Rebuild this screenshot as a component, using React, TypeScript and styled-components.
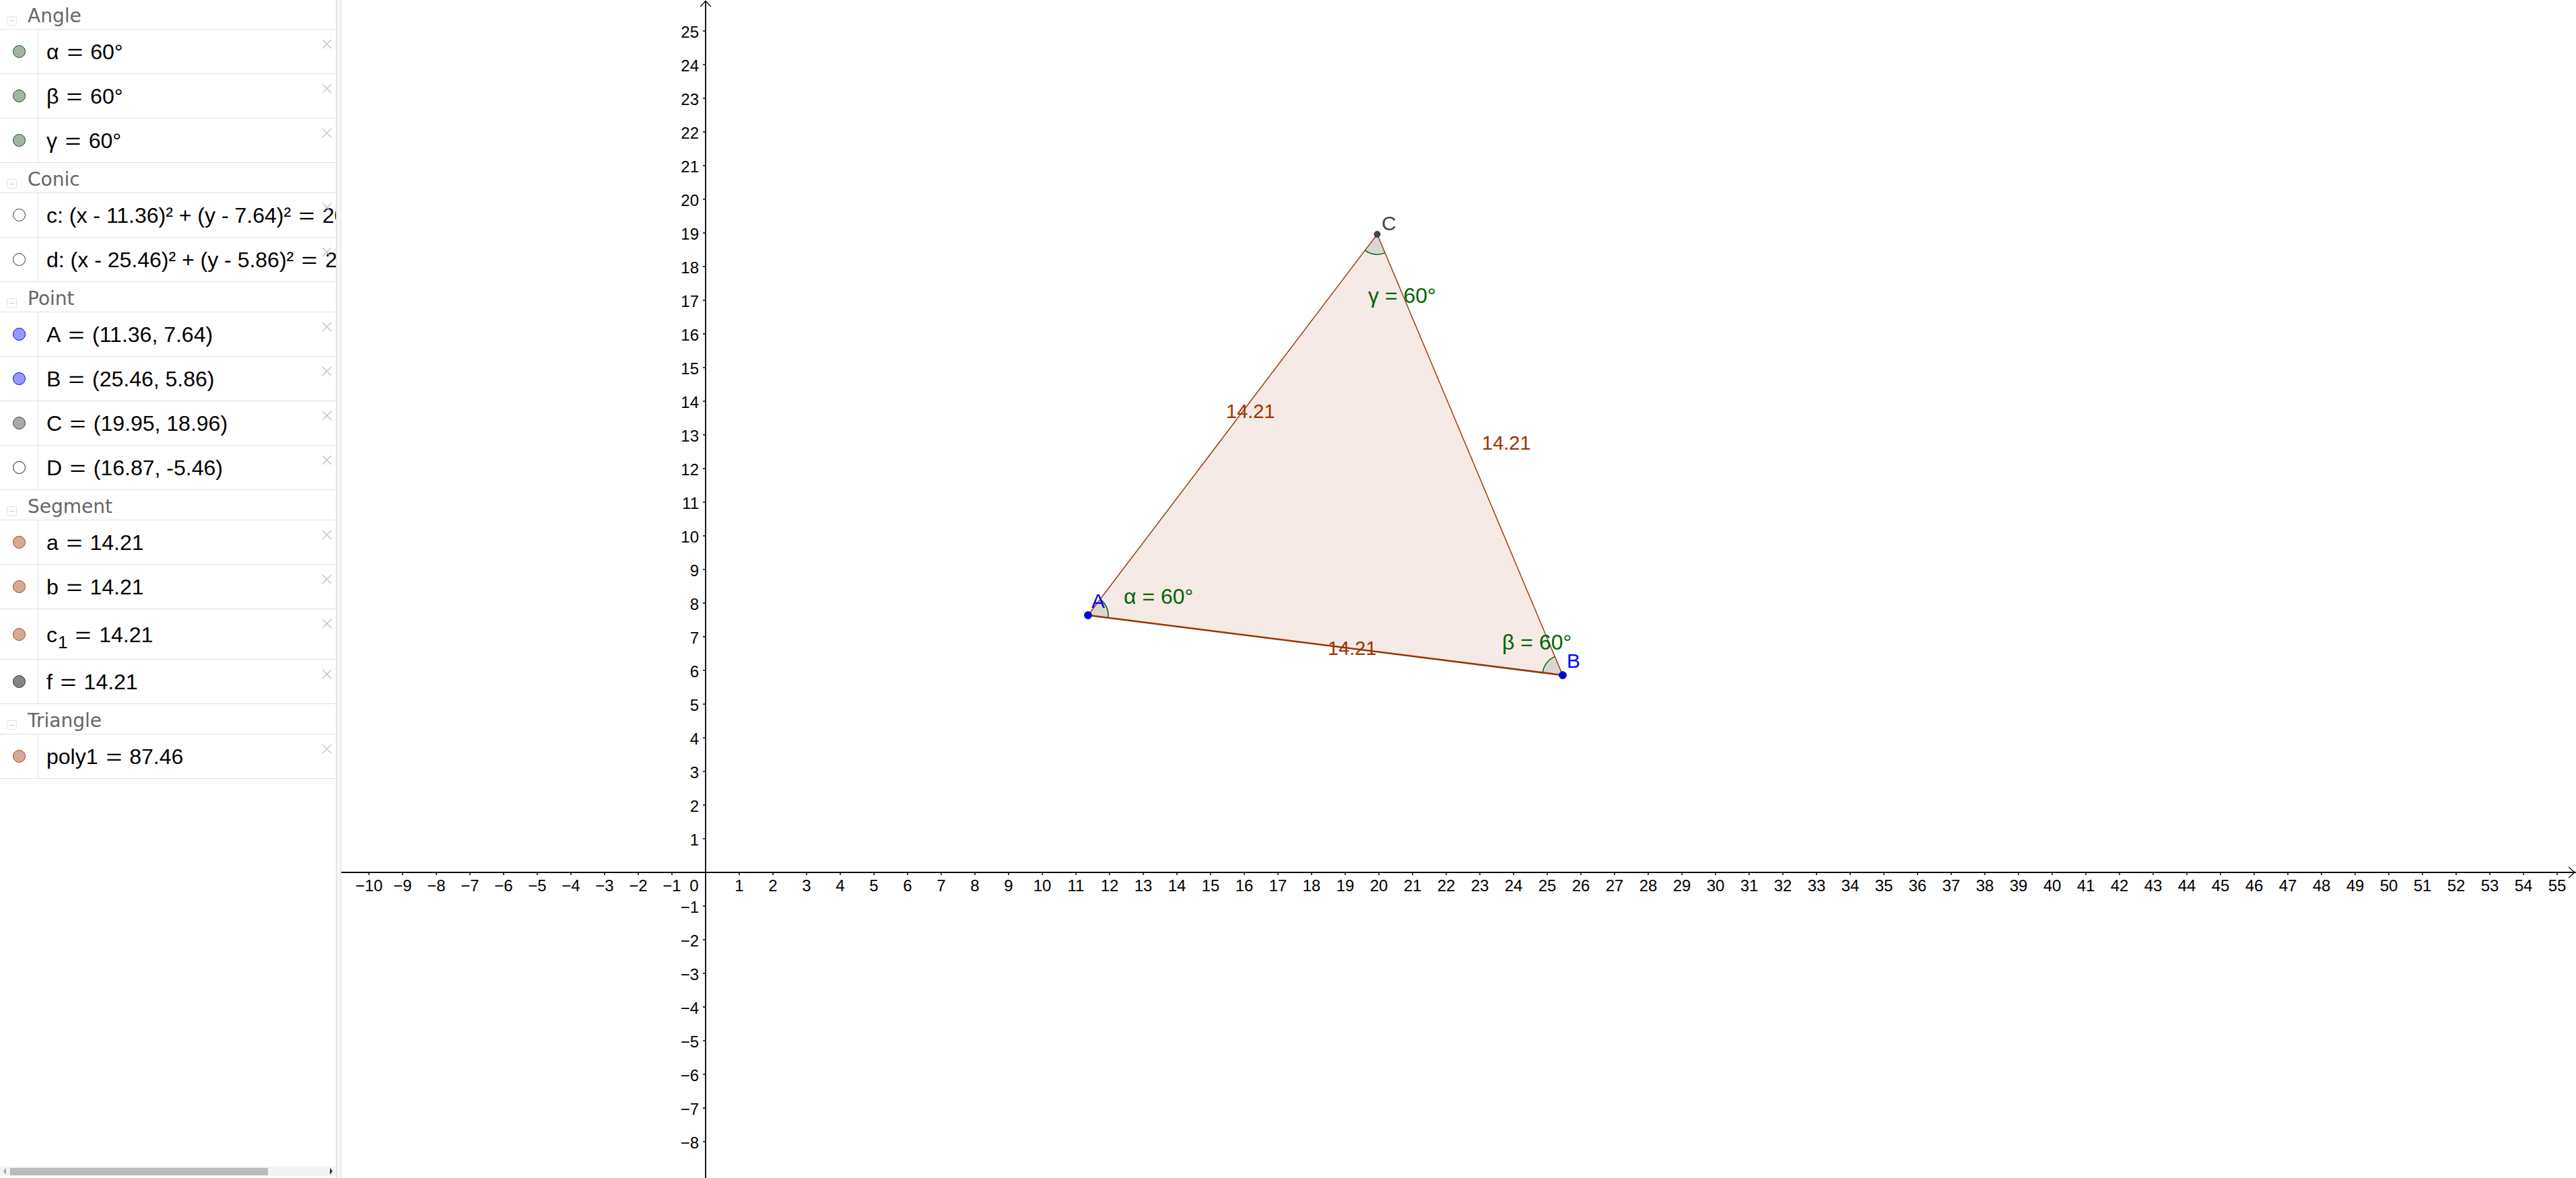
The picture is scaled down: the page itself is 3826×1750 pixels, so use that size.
import React from 'react'
import styled, { createGlobalStyle } from 'styled-components'

const GlobalStyle = createGlobalStyle`
  html, body {
    margin: 0;
    padding: 0;
    background: #fff;
    overflow: hidden;
  }
  body {
    font-family: "Liberation Sans", Arial, sans-serif;
  }
`

const Layout = styled.div`
  display: flex;
  width: 3826px;
  height: 1750px;
`

const AlgebraPanel = styled.div`
  width: 499px;
  flex: none;
  display: flex;
  flex-direction: column;
  background: #fff;
  overflow: hidden;
  border-right: 1px solid #d9d9d9;
`

const Splitter = styled.div`
  width: 6px;
  flex: none;
  background: #f6f6f6;
  border-right: 1px solid #e3e3e3;
`

const List = styled.div`
  flex: 1;
  display: flex;
  flex-direction: column;
`

const GroupHeader = styled.div<{ $first?: boolean }>`
  height: ${p => (p.$first ? 44 : 45)}px;
  flex: none;
  display: flex;
  align-items: center;
  padding: 4px 0 0 10px;
  box-sizing: border-box;
  border-bottom: 1px solid #e0e0e0;
  font-family: "DejaVu Sans", sans-serif;
  font-size: 28px;
  color: #666;
  gap: 16px;
`

const Collapse = styled.span`
  width: 15px;
  height: 14px;
  margin-top: 14px;
  box-sizing: border-box;
  border: 1px solid #e4e4e4;
  border-radius: 2px;
  display: flex;
  align-items: center;
  justify-content: center;

  &::after {
    content: '';
    width: 7px;
    height: 1px;
    background: #c8c8c8;
  }
`

const Row = styled.div<{ $tall?: boolean }>`
  position: relative;
  height: ${p => (p.$tall ? 74 : 65)}px;
  flex: none;
  display: flex;
  border-bottom: 1px solid #e0e0e0;
`

const MarkerCell = styled.div`
  width: 56px;
  flex: none;
  border-right: 1px solid #e0e0e0;
  display: flex;
  align-items: center;
  justify-content: center;
`

const Marker = styled.span<{ $fill: string; $stroke: string }>`
  width: 19px;
  height: 19px;
  box-sizing: border-box;
  border-radius: 50%;
  background: ${p => p.$fill};
  border: 1.5px solid ${p => p.$stroke};
`

const Content = styled.div`
  flex: 1;
  display: flex;
  align-items: center;
  padding: 2px 0 0 12px;
  font-size: 32px;
  color: #000;
  white-space: nowrap;
  overflow: hidden;
`

const Label = styled.span`
  white-space: nowrap;
`

const Eq = styled.span`
  display: inline-block;
  margin: 0 14px;
  transform: scaleX(1.28);
`

const Sub = styled.sub`
  font-size: 26px;
  vertical-align: -9px;
  line-height: 0;
  margin-left: 1px;
`

const Close = styled.svg`
  position: absolute;
  top: 14px;
  right: 6px;
  width: 15px;
  height: 15px;
`

const ScrollTrack = styled.div`
  flex: none;
  height: 14px;
  margin-bottom: 3px;
  display: flex;
  align-items: center;
  background: #f3f3f3;
`

const Arrow = styled.span<{ $dir: 'left' | 'right' }>`
  width: 0;
  height: 0;
  border-top: 5px solid transparent;
  border-bottom: 5px solid transparent;
  ${p =>
    p.$dir === 'left'
      ? 'border-right: 4px solid #9aa99a; margin-left: 5px;'
      : 'border-left: 4px solid #333; margin: 0 5px 0 auto;'}
`

const Thumb = styled.span`
  width: 383px;
  height: 11px;
  margin-left: 6px;
  background: #bcbcbc;
`

const Graphics = styled.div`
  flex: 1;
  background: #fff;
  overflow: hidden;

  svg {
    display: block;
  }
`

type Item = {
  label: React.ReactNode
  value: string
  fill: string
  stroke: string
  tall?: boolean
}

type Group = { title: string; items: Item[] }

const angleDot = { fill: '#a5b3a5', stroke: '#0a5a0a' }
const segDot = { fill: '#d5ab97', stroke: '#a0461e' }

const groups: Group[] = [
  {
    title: 'Angle',
    items: [
      { label: 'α', value: '60°', ...angleDot },
      { label: 'β', value: '60°', ...angleDot },
      { label: 'γ', value: '60°', ...angleDot },
    ],
  },
  {
    title: 'Conic',
    items: [
      { label: 'c: (x - 11.36)² + (y - 7.64)²', value: '201.92', fill: '#fff', stroke: '#333' },
      { label: 'd: (x - 25.46)² + (y - 5.86)²', value: '201.92', fill: '#fff', stroke: '#333' },
    ],
  },
  {
    title: 'Point',
    items: [
      { label: 'A', value: '(11.36, 7.64)', fill: '#9999ff', stroke: '#0000ee' },
      { label: 'B', value: '(25.46, 5.86)', fill: '#9999ff', stroke: '#0000ee' },
      { label: 'C', value: '(19.95, 18.96)', fill: '#a8aba8', stroke: '#444' },
      { label: 'D', value: '(16.87, -5.46)', fill: '#fff', stroke: '#222' },
    ],
  },
  {
    title: 'Segment',
    items: [
      { label: 'a', value: '14.21', ...segDot },
      { label: 'b', value: '14.21', ...segDot },
      { label: <>c<Sub>1</Sub></>, value: '14.21', tall: true, ...segDot },
      { label: 'f', value: '14.21', fill: '#858585', stroke: '#333' },
    ],
  },
  {
    title: 'Triangle',
    items: [{ label: 'poly1', value: '87.46', ...segDot }],
  },
]

// coordinate system of the graphics view (page pixels)
const OX = 1048
const OY = 1296
const U = 50
const px = (x: number) => OX + x * U
const py = (y: number) => OY - y * U

type Pt = { x: number; y: number }
const A: Pt = { x: px(11.36), y: py(7.64) }
const B: Pt = { x: px(25.46), y: py(5.86) }
const C: Pt = { x: px(19.95), y: py(18.96) }

const minus = (n: number) => (n < 0 ? '\u2212' + Math.abs(n) : String(n))

function arcPoints(v: Pt, p1: Pt, p2: Pt, r: number) {
  const a1 = Math.atan2(p1.y - v.y, p1.x - v.x)
  const a2 = Math.atan2(p2.y - v.y, p2.x - v.x)
  const s = { x: v.x + r * Math.cos(a1), y: v.y + r * Math.sin(a1) }
  const e = { x: v.x + r * Math.cos(a2), y: v.y + r * Math.sin(a2) }
  const sweep = Math.sin(a2 - a1) > 0 ? 1 : 0
  return { s, e, sweep }
}

const AngleMark = ({ v, p1, p2 }: { v: Pt; p1: Pt; p2: Pt }) => {
  const r = 30
  const { s, e, sweep } = arcPoints(v, p1, p2, r)
  const arc = `A ${r} ${r} 0 0 ${sweep} ${e.x} ${e.y}`
  return (
    <g>
      <path d={`M ${v.x} ${v.y} L ${s.x} ${s.y} ${arc} Z`} fill="#cfcfcf" fillOpacity={0.75} />
      <path d={`M ${s.x} ${s.y} ${arc}`} fill="none" stroke="#006400" strokeWidth={1.5} />
    </g>
  )
}

const xTicks = Array.from({ length: 66 }, (_, i) => i - 10).filter(i => i !== 0)
const yTicks = Array.from({ length: 34 }, (_, i) => i - 8).filter(i => i !== 0)

const Plot = () => (
  <svg width={3319} height={1750} viewBox="507 0 3319 1750">
    {/* axes */}
    <g stroke="#000" strokeWidth={1.8} fill="none">
      <line x1={507} y1={OY} x2={3826} y2={OY} />
      <line x1={OX} y1={1} x2={OX} y2={1750} />
      <polyline points={`${OX - 8},${10} ${OX},${1.5} ${OX + 8},${10}`} strokeWidth={1.2} />
      <polyline points={`3815,${OY - 8} 3824,${OY} 3815,${OY + 8}`} strokeWidth={1.2} />
    </g>
    <g stroke="#000" strokeWidth={1.5}>
      {xTicks.map(i => (
        <line key={i} x1={px(i)} y1={OY} x2={px(i)} y2={OY + 4} />
      ))}
      {yTicks.map(j => (
        <line key={j} x1={OX - 4} y1={py(j)} x2={OX} y2={py(j)} />
      ))}
    </g>
    <g fontFamily='"Liberation Sans", Arial, sans-serif' fontSize={24} fill="#000">
      {xTicks.map(i => (
        <text key={i} x={px(i)} y={OY + 28} textAnchor="middle">
          {minus(i)}
        </text>
      ))}
      <text x={1031} y={OY + 28} textAnchor="middle">0</text>
      {yTicks.map(j => (
        <text key={j} x={OX - 10} y={py(j) + 10} textAnchor="end">
          {minus(j)}
        </text>
      ))}
    </g>

    {/* triangle */}
    <polygon
      points={`${A.x},${A.y} ${B.x},${B.y} ${C.x},${C.y}`}
      fill="#993300"
      fillOpacity={0.1}
      stroke="none"
    />
    <AngleMark v={A} p1={B} p2={C} />
    <AngleMark v={B} p1={C} p2={A} />
    <AngleMark v={C} p1={A} p2={B} />
    <g stroke="#993300" fill="none">
      <line x1={C.x} y1={C.y} x2={A.x} y2={A.y} strokeWidth={1.4} />
      <line x1={C.x} y1={C.y} x2={B.x} y2={B.y} strokeWidth={1.4} />
      <line x1={A.x} y1={A.y} x2={B.x} y2={B.y} strokeWidth={2.6} />
    </g>

    {/* points */}
    <circle cx={A.x} cy={A.y} r={5.5} fill="#0000ff" stroke="#111" strokeWidth={0.8} />
    <circle cx={B.x} cy={B.y} r={5.5} fill="#0000ff" stroke="#111" strokeWidth={0.8} />
    <circle cx={C.x} cy={C.y} r={4.5} fill="#444" stroke="#222" strokeWidth={0.8} />

    <g fontFamily='"Liberation Sans", Arial, sans-serif'>
      <text x={1621} y={903} fontSize={30} fill="#0000ff">A</text>
      <text x={2327} y={992} fontSize={30} fill="#0000ff">B</text>
      <text x={2052} y={342} fontSize={30} fill="#444">C</text>

      <g fontSize={32} fill="#006400">
        <text x={1669} y={897}>α = 60°</text>
        <text x={2231} y={965}>β = 60°</text>
        <text x={2032} y={450}>γ = 60°</text>
      </g>

      <g fontSize={29} fill="#993300">
        <text x={1821} y={621}>14.21</text>
        <text x={2201} y={668}>14.21</text>
        <text x={1972} y={973}>14.21</text>
      </g>
    </g>
  </svg>
)

const CloseIcon = () => (
  <Close viewBox="0 0 15 15">
    <path d="M1 1 L14 14 M14 1 L1 14" stroke="#c2c2c2" strokeWidth={1.4} fill="none" />
  </Close>
)

const App = () => (
  <>
    <GlobalStyle />
    <Layout>
      <AlgebraPanel>
        <List>
          {groups.map((g, gi) => (
            <React.Fragment key={g.title}>
              <GroupHeader $first={gi === 0}>
                <Collapse />
                {g.title}
              </GroupHeader>
              {g.items.map((it, ii) => (
                <Row key={ii} $tall={it.tall}>
                  <MarkerCell>
                    <Marker $fill={it.fill} $stroke={it.stroke} />
                  </MarkerCell>
                  <Content>
                    <Label>{it.label}</Label>
                    <Eq>=</Eq>
                    {it.value}
                  </Content>
                  <CloseIcon />
                </Row>
              ))}
            </React.Fragment>
          ))}
        </List>
        <ScrollTrack>
          <Arrow $dir="left" />
          <Thumb />
          <Arrow $dir="right" />
        </ScrollTrack>
      </AlgebraPanel>
      <Splitter />
      <Graphics>
        <Plot />
      </Graphics>
    </Layout>
  </>
)

export default App
